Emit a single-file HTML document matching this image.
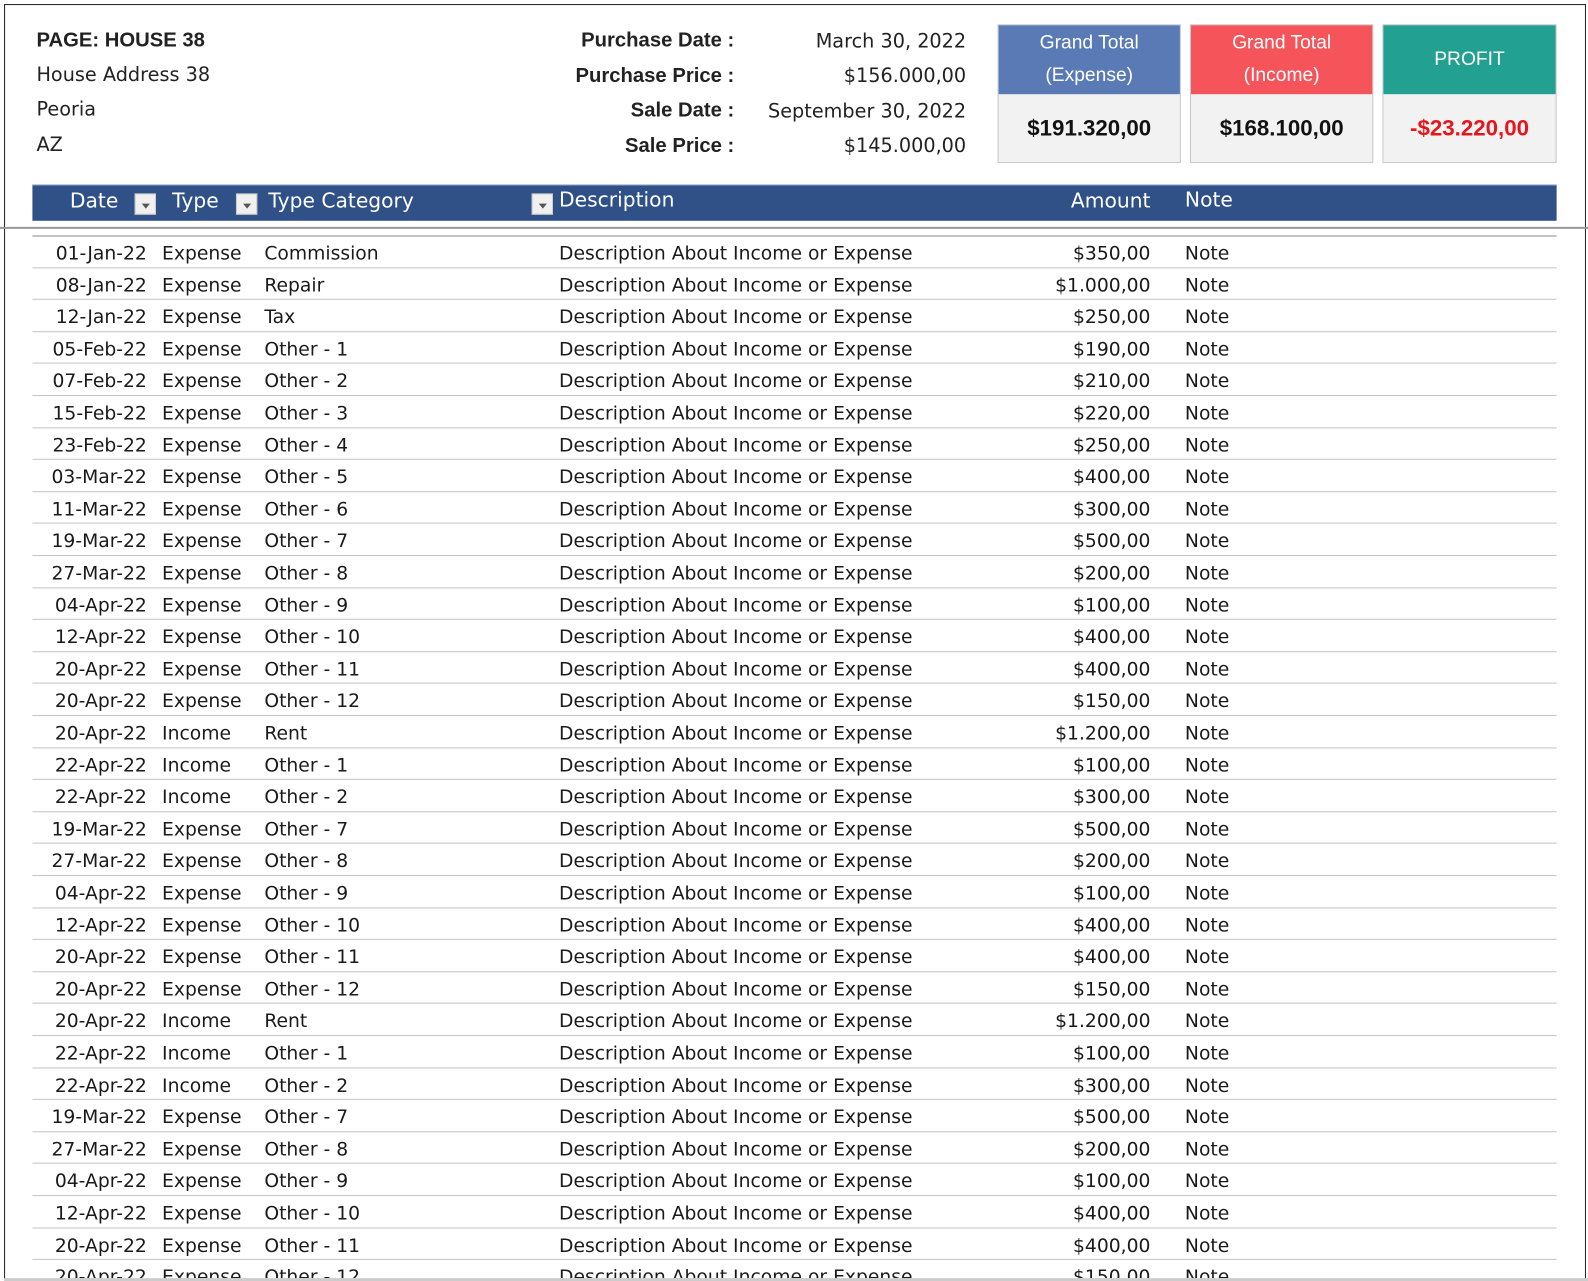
<!DOCTYPE html>
<html><head><meta charset="utf-8"><style>
html,body{margin:0;padding:0;background:#fff;overflow:hidden;width:1588px;height:1281px}
#w{position:absolute;left:0;top:0;width:1568px;height:1265px;transform:scale(1.01276);transform-origin:0 0;font-family:"DejaVu Sans","Liberation Sans",sans-serif;color:#222}
.a{position:absolute;white-space:nowrap}
.r{text-align:right}
.b{font-weight:bold}
.box{position:absolute;top:24px;height:137px;border:1px solid #c8c8c8;background:#f2f2f2;box-sizing:border-box}
.bh{height:68px;color:#fff;font-size:19px;text-align:center;display:flex;align-items:center;justify-content:center;line-height:32px;font-family:"Liberation Sans",sans-serif}
.bv{height:68px;display:flex;align-items:center;justify-content:center;font-size:22px;font-weight:bold;font-family:"Liberation Sans",sans-serif;color:#111}
.dd{position:absolute;top:191px;width:21px;height:21px;background:#f0f0f0;border:1px solid #ccc;box-sizing:border-box}
.dd:after{content:"";position:absolute;left:6px;top:9px;border-left:4px solid transparent;border-right:4px solid transparent;border-top:5px solid #555}
.row{position:absolute;left:32px;width:1505px;height:31.6px;border-bottom:1.5px solid #c4c4c4;box-sizing:border-box;font-size:18.5px;line-height:31px;color:#1a1a1a}
.row span{position:absolute;top:2px}
</style></head><body><div id="w">
<div class="a" style="left:4px;top:4px;width:1560px;height:1258px;border:1.5px solid #222;border-bottom:none"></div>
<div class="a" style="left:0;top:224px;width:1568px;height:2px;background:#999"></div>

<div class="a b" style="left:36px;top:29px;font-size:20px;font-family:'Liberation Sans',sans-serif">PAGE: HOUSE 38</div>
<div class="a" style="left:36px;top:63px;font-size:19px">House Address 38</div>
<div class="a" style="left:36px;top:97px;font-size:19px">Peoria</div>
<div class="a" style="left:36px;top:132px;font-size:19px">AZ</div>

<div class="a b r" style="right:843px;top:29px;font-size:20px;font-family:'Liberation Sans',sans-serif">Purchase Date :</div>
<div class="a b r" style="right:843px;top:64px;font-size:20px;font-family:'Liberation Sans',sans-serif">Purchase Price :</div>
<div class="a b r" style="right:843px;top:98px;font-size:20px;font-family:'Liberation Sans',sans-serif">Sale Date :</div>
<div class="a b r" style="right:843px;top:133px;font-size:20px;font-family:'Liberation Sans',sans-serif">Sale Price :</div>
<div class="a r" style="right:614px;top:30px;font-size:19px">March 30, 2022</div>
<div class="a r" style="right:614px;top:64px;font-size:19px">$156.000,00</div>
<div class="a r" style="right:614px;top:99px;font-size:19px">September 30, 2022</div>
<div class="a r" style="right:614px;top:133px;font-size:19px">$145.000,00</div>

<div class="box" style="left:985px;width:181px"><div class="bh" style="background:#5a7ab5">Grand Total<br>(Expense)</div><div class="bv">$191.320,00</div></div>
<div class="box" style="left:1175px;width:181px"><div class="bh" style="background:#f5555a">Grand Total<br>(Income)</div><div class="bv">$168.100,00</div></div>
<div class="box" style="left:1365px;width:172px"><div class="bh" style="background:#22a092">PROFIT</div><div class="bv" style="color:#e8141c">-$23.220,00</div></div>

<div class="a" style="left:32px;top:182px;width:1505px;height:35px;background:#2f5188;border-top:1px solid #c8d0e0"></div>
<div class="a" style="left:69px;top:186px;font-size:20px;color:#fff">Date</div>
<div class="dd" style="left:133px"></div>
<div class="a" style="left:170px;top:186px;font-size:20px;color:#fff">Type</div>
<div class="dd" style="left:233px"></div>
<div class="a" style="left:265px;top:186px;font-size:20px;color:#fff">Type Category</div>
<div class="dd" style="left:525px"></div>
<div class="a" style="left:552px;top:185px;font-size:20px;color:#fff">Description</div>
<div class="a r" style="right:432px;top:186px;font-size:20px;color:#fff">Amount</div>
<div class="a" style="left:1170px;top:185px;font-size:20px;color:#fff">Note</div>

<div class="a" style="left:32px;top:232px;width:1505px;height:1.5px;background:#c4c4c4"></div>
<div class="a" style="left:0;top:233px;width:1568px;height:1029px;overflow:hidden" id="rows"></div>
<div class="a" style="left:4px;top:1262px;width:1564px;height:3px;background:#ccc"></div>
</div>
<script>
var d=[["01-Jan-22","Expense","Commission","$350,00"],["08-Jan-22","Expense","Repair","$1.000,00"],["12-Jan-22","Expense","Tax","$250,00"],["05-Feb-22","Expense","Other - 1","$190,00"],["07-Feb-22","Expense","Other - 2","$210,00"],["15-Feb-22","Expense","Other - 3","$220,00"],["23-Feb-22","Expense","Other - 4","$250,00"],["03-Mar-22","Expense","Other - 5","$400,00"],["11-Mar-22","Expense","Other - 6","$300,00"]];
var e=[["19-Mar-22","Expense","Other - 7","$500,00"],["27-Mar-22","Expense","Other - 8","$200,00"],["04-Apr-22","Expense","Other - 9","$100,00"],["12-Apr-22","Expense","Other - 10","$400,00"],["20-Apr-22","Expense","Other - 11","$400,00"],["20-Apr-22","Expense","Other - 12","$150,00"],["20-Apr-22","Income","Rent","$1.200,00"],["22-Apr-22","Income","Other - 1","$100,00"],["22-Apr-22","Income","Other - 2","$300,00"]];
d=d.concat(e,e,e).slice(0,33);
var h="";
d.forEach(function(r,i){h+='<div class="row" style="top:'+(i*31.6)+'px"><span style="right:1392px">'+r[0]+'</span><span style="left:128px">'+r[1]+'</span><span style="left:229px">'+r[2]+'</span><span style="left:520px">Description About Income or Expense</span><span style="right:401px">'+r[3]+'</span><span style="left:1138px">Note</span></div>';});
document.getElementById("rows").innerHTML=h;
</script>
</body></html>
